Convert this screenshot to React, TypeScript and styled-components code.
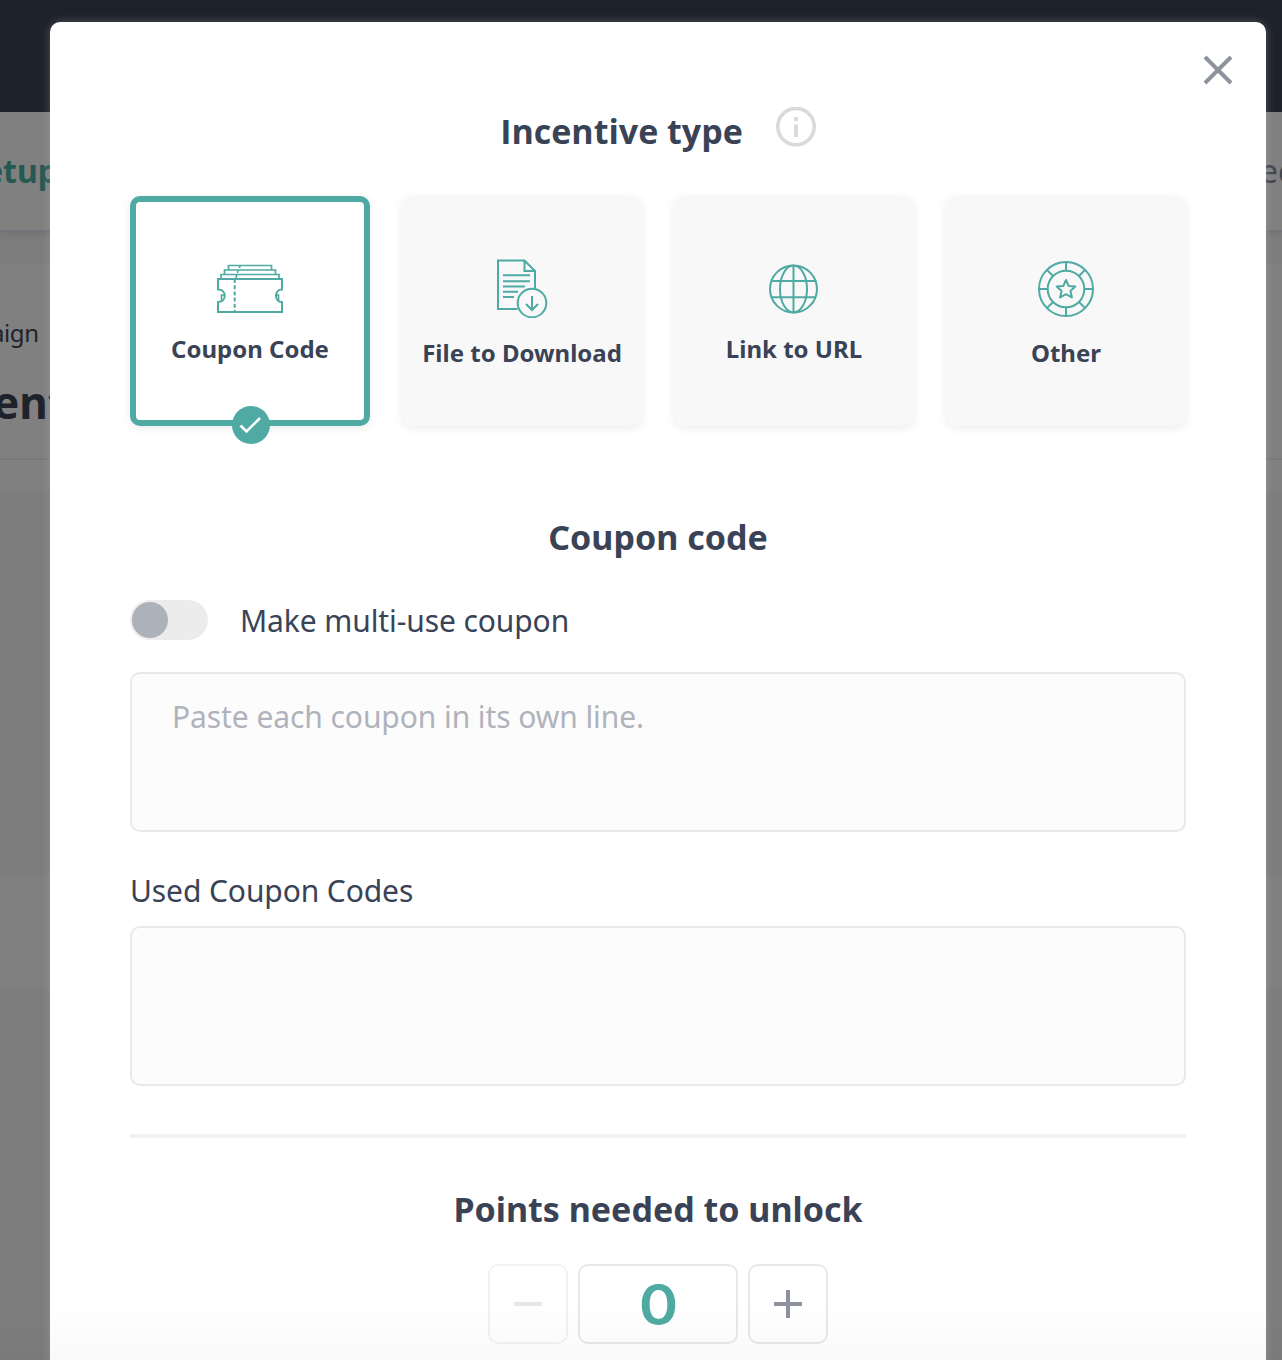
import React from "react";
import styled, { createGlobalStyle } from "styled-components";

const teal = "#4eaaa2";
const ink = "#3a4356";

const GlobalStyle = createGlobalStyle`
  * { box-sizing: border-box; }
  html, body { margin: 0; padding: 0; overflow: hidden; }
  body { font-family: "Noto Sans", "Open Sans", sans-serif; color: ${ink}; }
`;

const Screen = styled.div`
  position: relative;
  width: 1282px;
  height: 1360px;
  overflow: hidden;
  background: #7d7d7d;
`;

const Header = styled.div`
  height: 112px;
  background: #1e222b;
`;

const Nav = styled.div`
  display: flex;
  align-items: center;
  justify-content: space-between;
  height: 120px;
  padding-bottom: 2px;
  background: #808080;
  border-bottom: 2px solid #73747a;
  box-shadow: 0 2px 8px rgba(30, 34, 43, 0.12);
  font-size: 32px;
  white-space: nowrap;
`;

const ActiveTab = styled.span`
  margin-left: -16px;
  color: #275953;
  font-weight: 700;
`;

const Tab = styled.span`
  width: 22px;
  color: #43464d;
`;

const Panel = styled.div<{ $top: number; $height: number }>`
  height: ${(p) => p.$height}px;
  margin-top: ${(p) => p.$top}px;
  background: #808080;
  white-space: nowrap;
`;

const Title = styled.div`
  height: 196px;
  padding-top: 52px;
  border-bottom: 2px solid #787878;
  color: #1e222b;
`;

const Crumb = styled.div`
  margin-left: -9px;
  font-size: 24px;
  line-height: 34px;
  letter-spacing: -0.4px;
`;

const PageName = styled.div`
  margin: 22px 0 0 -7px;
  font-size: 44px;
  line-height: 60px;
  font-weight: 700;
`;

const Modal = styled.div`
  position: absolute;
  top: 22px;
  left: 50px;
  width: 1216px;
  height: 1400px;
  padding: 80px 80px 0;
  display: flex;
  flex-direction: column;
  border-radius: 10px;
  background: #fff;
  box-shadow: 0 0 10px rgba(190, 195, 205, 0.3);
`;

const Close = styled.button`
  position: absolute;
  top: 32px;
  right: 32px;
  width: 32px;
  height: 32px;
  padding: 0;
  border: 0;
  background: none;
`;

const Heading = styled.h2`
  margin: 0;
  font-size: 34px;
  line-height: 48px;
  font-weight: 700;
  text-align: center;
  white-space: nowrap;
`;

const TypeHeading = styled(Heading)`
  font-family: "Open Sans", "Noto Sans", sans-serif;
`;

const HeadingRow = styled.div`
  display: flex;
  justify-content: center;
  gap: 33px;
  height: 94px;
  padding-top: 5px;
`;

const Cards = styled.div`
  display: flex;
  gap: 32px;
  margin-bottom: 87px;
`;

const Card = styled.div<{ $selected?: boolean }>`
  position: relative;
  display: flex;
  flex-direction: column;
  align-items: center;
  width: 240px;
  height: 230px;
  padding-top: ${(p) => (p.$selected ? 54 : 60)}px;
  border: ${(p) => (p.$selected ? `6px solid ${teal}` : "0")};
  border-radius: 10px;
  background: ${(p) => (p.$selected ? "#fff" : "#f8f8f8")};
  box-shadow: 0 2px 8px rgba(59, 66, 85, 0.1);
`;

const CardIcon = styled.div<{ $height: number; $top: number; $shift?: number }>`
  height: ${(p) => p.$height}px;
  padding-top: ${(p) => p.$top}px;
  padding-right: ${(p) => p.$shift ?? 0}px;
  svg { display: block; }
`;

const CardLabel = styled.div`
  font-size: 24px;
  line-height: 32px;
  font-weight: 700;
  white-space: nowrap;
`;

const Check = styled.div`
  position: absolute;
  left: 96px;
  bottom: -24px;
  width: 38px;
  height: 38px;
  border-radius: 50%;
  background: ${teal};
`;

const ToggleRow = styled.div`
  display: flex;
  align-items: center;
  gap: 32px;
  height: 40px;
  margin: 39px 0 32px;
`;

const Toggle = styled.div`
  width: 78px;
  height: 40px;
  padding: 2px;
  border-radius: 20px;
  background: #ececec;
`;

const Knob = styled.div`
  width: 36px;
  height: 36px;
  border-radius: 50%;
  background: #adb1ba;
`;

const Label = styled.div`
  font-size: 30px;
  line-height: 42px;
  letter-spacing: -0.1px;
  white-space: nowrap;
`;

const ToggleLabel = styled(Label)`
  padding-top: 2px;
`;

const Box = styled.div`
  height: 160px;
  padding: 22px 40px;
  border: 2px solid #e9e9e9;
  border-radius: 10px;
  background: #fcfcfc;
  color: #b0b3bb;
  font-size: 30px;
  line-height: 42px;
  letter-spacing: -0.08px;
`;

const UsedLabel = styled(Label)`
  margin: 38px 0 14px;
`;

const Rule = styled.div`
  height: 4px;
  margin: 48px 0 47px;
  background: #f2f2f2;
`;

const Stepper = styled.div`
  display: flex;
  justify-content: center;
  gap: 10px;
  margin-top: 31px;
`;

const StepButton = styled.button<{ $disabled?: boolean }>`
  display: flex;
  align-items: center;
  justify-content: center;
  width: 80px;
  height: 80px;
  padding: 0;
  border: 2px solid ${(p) => (p.$disabled ? "#f2f2f2" : "#e8e8e8")};
  border-radius: 10px;
  background: transparent;
  color: ${(p) => (p.$disabled ? "#e7e7e7" : "#8e929e")};
`;

const Value = styled.div`
  width: 160px;
  height: 80px;
  border: 2px solid #e8e8e8;
  border-radius: 10px;
  color: ${teal};
  font-family: Inter, sans-serif;
  font-size: 56px;
  font-weight: 600;
  line-height: 78px;
  text-align: center;
`;

const Digit = styled.span`
  display: inline-block;
  transform: scaleX(1.07);
`;

const Fade = styled.div`
  position: absolute;
  left: 0;
  right: 0;
  bottom: 0;
  height: 56px;
  background: linear-gradient(rgba(0, 0, 0, 0), rgba(0, 0, 0, 0.025));
`;

const line = { fill: "none", stroke: teal, strokeWidth: 2 };

const Coupon = () => (
  <svg width="68" height="50" viewBox="0 0 68 50" {...line}>
    <path d="M2 15H66V25.500C58 25.500 58 38 66 38V48H2V38C11 38 11 25.500 2 25.500Z" />
    <path d="M5 15V10.500H63V15M8.500 10V6H59.500V10M12.500 5.500V1.500H55.500V5.500" strokeWidth="1.700" />
    <path d="M18.700 15V48" strokeDasharray="4 2.200" />
    <path d="M20.700 10.500L20 14M22 6L21.500 9M24 1.500L23.500 4M5.500 38V31H9M62.500 38V31H59" strokeWidth="1.700" />
  </svg>
);

const Download = () => (
  <svg width="52" height="60" viewBox="0 0 52 60" {...line}>
    <path d="M21.500 51H2V2.500H28.500L39 13V31M28.500 2.500V13H39.500" />
    <path d="M7 17.300H34M7 23.300H34M7 28.500H29M7 33.700H22M7 39H18" />
    <circle cx="36" cy="45" r="14.300" />
    <path d="M36 38V51.500M30 46L36 52L42 46" />
  </svg>
);

const Globe = () => (
  <svg width="50" height="50" viewBox="0 0 50 50" {...line}>
    <circle cx="24.500" cy="25" r="23.500" />
    <ellipse cx="24.500" cy="25" rx="13.500" ry="23.500" />
    <path d="M24.500 1V49M2.500 17H46.500M2.500 33.300H46.500" />
  </svg>
);

const Badge = () => (
  <svg width="58" height="58" viewBox="0 0 58 58" {...line}>
    <circle cx="29" cy="29" r="27" />
    <circle cx="29" cy="29" r="18.300" />
    {[0, 45, 90, 135, 180, 225, 270, 315].map((a) => (
      <path key={a} d="M29 2V10.700" transform={`rotate(${a} 29 29)`} />
    ))}
    <path d="M29 20L31.700 26L38.300 26.600L33.400 31L34.900 37.500L29 34.200L23.100 37.500L24.600 31L19.700 26.600L26.300 26Z" strokeLinejoin="round" />
  </svg>
);

export default function App() {
  return (
    <Screen>
      <GlobalStyle />
      <Header />
      <Nav>
        <ActiveTab>etup</ActiveTab>
        <Tab>ec</Tab>
      </Nav>
      <Panel $top={32} $height={226}>
        <Title>
          <Crumb>aign</Crumb>
          <PageName>ent</PageName>
        </Title>
      </Panel>
      <Panel $top={386} $height={112} />
      <Modal>
        <Close aria-label="Close">
          <svg width="32" height="32" viewBox="0 0 32 32" fill="none" stroke="#8e939e" strokeWidth="4">
            <path d="M3 3L29 29M29 3L3 29" />
          </svg>
        </Close>
        <HeadingRow>
          <TypeHeading>Incentive type</TypeHeading>
          <svg width="40" height="40" viewBox="0 0 40 40">
            <circle cx="20" cy="19.600" r="18.200" fill="none" stroke="#dadada" strokeWidth="3.600" />
            <path d="M18 10H22V14H18ZM18 17.500H22V30H18Z" fill="#dadada" />
          </svg>
        </HeadingRow>
        <Cards>
          <Card $selected>
            <CardIcon $height={77} $top={8}><Coupon /></CardIcon>
            <CardLabel>Coupon Code</CardLabel>
            <Check>
              <svg width="38" height="38" viewBox="0 0 38 38" fill="none" stroke="#fff" strokeWidth="2.600">
                <path d="M8.500 19.500L14.500 25.500L28 12" />
              </svg>
            </Check>
          </Card>
          <Card>
            <CardIcon $height={81} $top={1.5}><Download /></CardIcon>
            <CardLabel>File to Download</CardLabel>
          </Card>
          <Card>
            <CardIcon $height={77} $top={8}><Globe /></CardIcon>
            <CardLabel>Link to URL</CardLabel>
          </Card>
          <Card>
            <CardIcon $height={81} $top={4}><Badge /></CardIcon>
            <CardLabel>Other</CardLabel>
          </Card>
        </Cards>
        <Heading>Coupon code</Heading>
        <ToggleRow>
          <Toggle><Knob /></Toggle>
          <ToggleLabel>Make multi-use coupon</ToggleLabel>
        </ToggleRow>
        <Box>Paste each coupon in its own line.</Box>
        <UsedLabel>Used Coupon Codes</UsedLabel>
        <Box />
        <Rule />
        <Heading>Points needed to unlock</Heading>
        <Stepper>
          <StepButton $disabled aria-label="Decrease">
            <svg width="28" height="28" stroke="currentColor" strokeWidth="4"><path d="M0 14H28" /></svg>
          </StepButton>
          <Value><Digit>0</Digit></Value>
          <StepButton aria-label="Increase">
            <svg width="28" height="28" stroke="currentColor" strokeWidth="4"><path d="M0 14H28M14 0V28" /></svg>
          </StepButton>
        </Stepper>
      </Modal>
      <Fade />
    </Screen>
  );
}
